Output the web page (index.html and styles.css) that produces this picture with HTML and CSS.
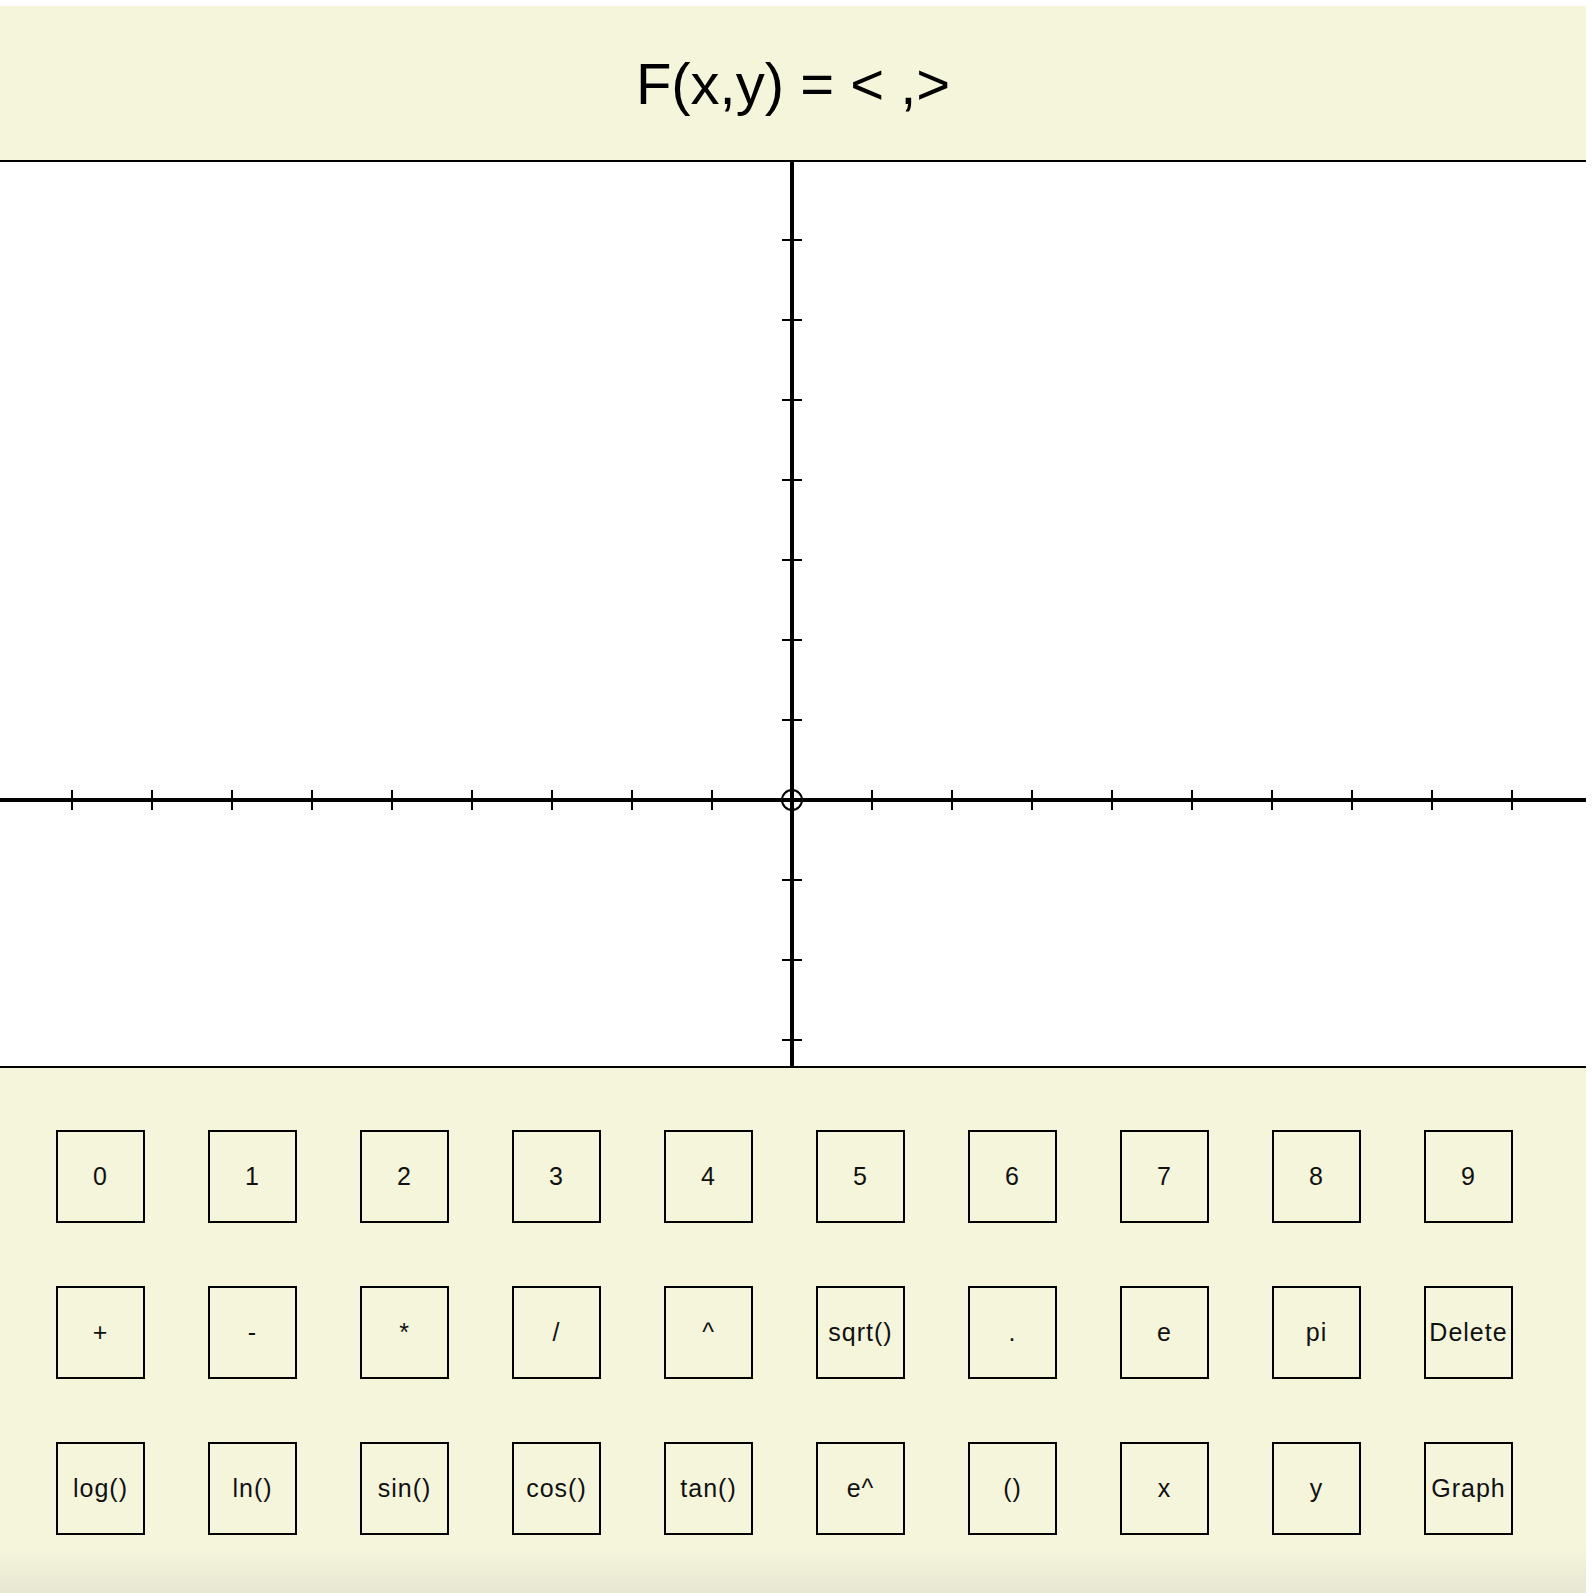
FILE: index.html
```html
<!DOCTYPE html>
<html lang="en">
<head>
    <meta charset="UTF-8">
    <meta name="viewport" content="width=device-width, initial-scale=1.0">
    <title>Vector Field Grapher</title>
    <link rel="stylesheet" href="styles.css">
</head>
<body>

<div class="app">
    <div class="Kopf">
        <h1 id="formula">F(x,y) = &lt; ,&gt;</h1>
    </div>

    <div class="graph">
        <svg width="1586" height="904" viewBox="0 0 1586 904">
            <g stroke="#000" stroke-width="4">
                <line x1="792" y1="0" x2="792" y2="904"/>
                <line x1="0" y1="638" x2="1586" y2="638"/>
            </g>
            <g stroke="#000" stroke-width="2">
                <!-- x ticks -->
                <line x1="72" y1="628" x2="72" y2="648"/>
                <line x1="152" y1="628" x2="152" y2="648"/>
                <line x1="232" y1="628" x2="232" y2="648"/>
                <line x1="312" y1="628" x2="312" y2="648"/>
                <line x1="392" y1="628" x2="392" y2="648"/>
                <line x1="472" y1="628" x2="472" y2="648"/>
                <line x1="552" y1="628" x2="552" y2="648"/>
                <line x1="632" y1="628" x2="632" y2="648"/>
                <line x1="712" y1="628" x2="712" y2="648"/>
                <line x1="872" y1="628" x2="872" y2="648"/>
                <line x1="952" y1="628" x2="952" y2="648"/>
                <line x1="1032" y1="628" x2="1032" y2="648"/>
                <line x1="1112" y1="628" x2="1112" y2="648"/>
                <line x1="1192" y1="628" x2="1192" y2="648"/>
                <line x1="1272" y1="628" x2="1272" y2="648"/>
                <line x1="1352" y1="628" x2="1352" y2="648"/>
                <line x1="1432" y1="628" x2="1432" y2="648"/>
                <line x1="1512" y1="628" x2="1512" y2="648"/>
                <!-- y ticks -->
                <line x1="782" y1="78" x2="802" y2="78"/>
                <line x1="782" y1="158" x2="802" y2="158"/>
                <line x1="782" y1="238" x2="802" y2="238"/>
                <line x1="782" y1="318" x2="802" y2="318"/>
                <line x1="782" y1="398" x2="802" y2="398"/>
                <line x1="782" y1="478" x2="802" y2="478"/>
                <line x1="782" y1="558" x2="802" y2="558"/>
                <line x1="782" y1="718" x2="802" y2="718"/>
                <line x1="782" y1="798" x2="802" y2="798"/>
                <line x1="782" y1="878" x2="802" y2="878"/>
            </g>
            <circle cx="792" cy="638" r="10" fill="none" stroke="#000" stroke-width="2"/>
        </svg>
    </div>

    <div class="keypad">
        <div class="reihe">
            <button class="taste">0</button>
            <button class="taste">1</button>
            <button class="taste">2</button>
            <button class="taste">3</button>
            <button class="taste">4</button>
            <button class="taste">5</button>
            <button class="taste">6</button>
            <button class="taste">7</button>
            <button class="taste">8</button>
            <button class="taste">9</button>
        </div>
        <div class="reihe">
            <button class="taste">+</button>
            <button class="taste">-</button>
            <button class="taste">*</button>
            <button class="taste">/</button>
            <button class="taste">^</button>
            <button class="taste">sqrt()</button>
            <button class="taste">.</button>
            <button class="taste">e</button>
            <button class="taste">pi</button>
            <button class="taste">Delete</button>
        </div>
        <div class="reihe">
            <button class="taste">log()</button>
            <button class="taste">ln()</button>
            <button class="taste">sin()</button>
            <button class="taste">cos()</button>
            <button class="taste">tan()</button>
            <button class="taste">e^</button>
            <button class="taste">()</button>
            <button class="taste">x</button>
            <button class="taste">y</button>
            <button class="taste">Graph</button>
        </div>
    </div>
</div>

</body>
</html>
```

FILE: styles.css
```css
body {
    margin: 0;
    padding-top: 6px;
    background-color: #fff;
    font-family: "Liberation Sans", Arial, sans-serif;
}

.app {
    width: 1586px;
}

.Kopf {
    height: 154px;
    display: flex;
    align-items: center;
    justify-content: center;
    background-color: #f5f5dc;
    border-bottom: 2px solid #000;
}

h1 {
    margin: 0;
    font-size: 58px;
    font-weight: normal;
    color: #000;
}

.graph {
    height: 904px;
    background-color: #fff;
}

.graph svg {
    display: block;
}

.keypad {
    border-top: 2px solid #000;
    padding: 62px 0 58px 56px;
    display: flex;
    flex-direction: column;
    gap: 63px;
    background: linear-gradient(to bottom, #f5f5dc calc(100% - 45px), #e7e7d2);
}

.reihe {
    display: flex;
    gap: 63px;
}

.taste {
    width: 89px;
    height: 93px;
    padding: 0;
    border: 2px solid #000;
    background: transparent;
    color: #111;
    font-family: "Liberation Sans", Arial, sans-serif;
    font-size: 25px;
    letter-spacing: 1px;
    white-space: nowrap;
    cursor: pointer;
}
```
